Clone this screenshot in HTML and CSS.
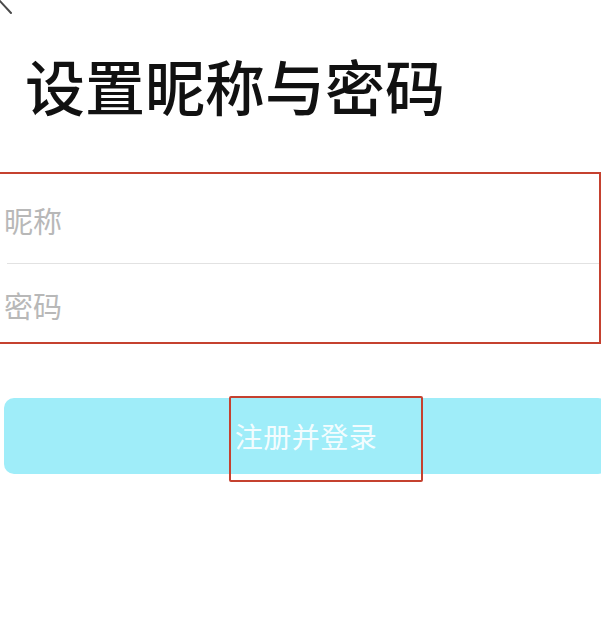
FILE: index.html
```html
<!DOCTYPE html>
<html lang="zh-CN">
<head>
<meta charset="utf-8">
<title>设置昵称与密码</title>
<link rel="stylesheet" href="styles.css">
</head>
<body>
<div class="page">
  <header class="nav">
    <svg class="back" width="16" height="16" viewBox="0 0 16 16" aria-hidden="true">
      <path d="M-2 -1 L11 13" stroke="#4a4a4a" stroke-width="2" fill="none" stroke-linecap="round"/>
    </svg>
  </header>
  <h1 class="title">设置昵称与密码</h1>
  <div class="form">
    <div class="field field-first"><input class="input" type="text" placeholder="昵称"></div>
    <div class="divider"></div>
    <div class="field field-second"><input class="input" type="password" placeholder="密码"></div>
  </div>
  <div class="btn">
    <span class="label">注册并登录</span>
    <span class="mark"></span>
  </div>
</div>
</body>
</html>
```
FILE: styles.css
```css
html, body {
  margin: 0;
  padding: 0;
  background: #ffffff;
}
body {
  font-family: "Noto Sans CJK SC", "Noto Sans", sans-serif;
  overflow: hidden;
  width: 601px;
  height: 635px;
}
.page {
  display: flex;
  flex-direction: column;
}
.nav {
  height: 55px;
  display: flex;
  align-items: flex-start;
}
.back {
  display: block;
}
.title {
  margin: 0 0 0 25px;
  font-size: 60px;
  line-height: 60px;
  font-weight: 500;
  color: #111111;
  height: 60px;
}
.form {
  margin-top: 57px;
  border: 2px solid #c5412f;
  border-left: none;
  display: flex;
  flex-direction: column;
}
.field {
  display: flex;
  align-items: center;
}
.field-first {
  height: 89px;
  padding-top: 2px;
  box-sizing: border-box;
}
.field-second {
  height: 78px;
  padding-top: 3px;
  box-sizing: border-box;
}
.divider {
  height: 1px;
  background: #e2e2e2;
  margin-left: 7px;
}
.input {
  border: none;
  outline: none;
  background: transparent;
  font-family: "Noto Sans CJK SC", "Noto Sans", sans-serif;
  font-size: 29px;
  color: #333333;
  padding: 0 0 0 4px;
  margin: 0;
  width: 100%;
}
.input::placeholder {
  color: #b8b8b8;
}
.btn {
  position: relative;
  margin: 54px -7px 0 4px;
  height: 76px;
  border-radius: 10px;
  background: #9fedf9;
  display: flex;
  align-items: center;
  justify-content: center;
}
.label {
  color: rgba(255, 255, 255, 0.9);
  font-size: 28px;
  line-height: 28px;
  letter-spacing: 0.5px;
}
.mark {
  position: absolute;
  left: 225px;
  top: -2px;
  width: 190px;
  height: 82px;
  border: 2px solid #c5412f;
  border-radius: 2px;
}
```
